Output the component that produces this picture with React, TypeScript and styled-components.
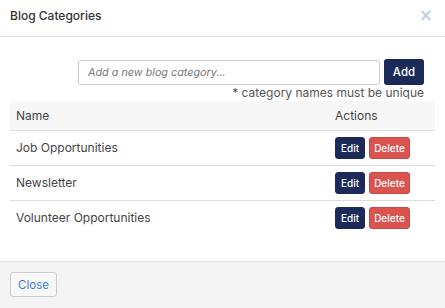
import React from "react";
import styled, { createGlobalStyle } from "styled-components";

const Global = createGlobalStyle`
  html, body { margin: 0; padding: 0; background: #fff; }
  body { font-family: Inter, "Noto Sans", sans-serif; color: #333; }
  * { box-sizing: border-box; }
`;

const Modal = styled.div`
  width: 445px;
  height: 308px;
  display: flex;
  flex-direction: column;
  background: #fff;
`;

const Header = styled.div`
  height: 37px;
  display: flex;
  align-items: center;
  justify-content: space-between;
  padding: 0 12px 5px 10px;
  border-bottom: 1px solid #e5e5e5;
`;

const Title = styled.h4`
  margin: 0;
  font-size: 12px;
  font-weight: 500;
  color: #333;
`;

const CloseX = styled.button`
  border: 0;
  background: none;
  padding: 0;
  color: #c3d1e4;
  font-size: 17px;
  font-weight: 700;
  line-height: 1;
  cursor: pointer;
  font-family: "DejaVu Sans", sans-serif;
`;

const Body = styled.div`
  flex: 1;
  padding: 22px 10px 0 10px;
  display: flex;
  flex-direction: column;
`;

const FormArea = styled.div`
  display: flex;
  flex-direction: column;
  align-items: flex-end;
  padding-right: 11px;
`;

const InputGroup = styled.div`
  display: flex;
  gap: 4px;
  align-items: center;
`;

const TextInput = styled.input`
  width: 302px;
  height: 25px;
  border: 1px solid #ccc;
  border-radius: 3px;
  padding: 0 9px;
  font-family: Inter, sans-serif;
  font-size: 10.8px;
  color: #333;
  outline: none;
  &::placeholder { color: #777; font-style: italic; }
`;

const AddButton = styled.button`
  width: 40px;
  height: 26px;
  border: 0;
  border-radius: 3px;
  background: #1c2a5a;
  color: #fff;
  font-family: Inter, sans-serif;
  font-size: 11.5px;
  font-weight: 500;
  padding: 0;
`;

const Note = styled.div`
  font-size: 12px;
  color: #555;
  margin-top: 0;
  line-height: 15px;
`;

const Table = styled.table`
  margin-top: 1px;
  width: 425px;
  border-collapse: collapse;
  font-size: 12px;
  color: #444;
`;

const HeadRow = styled.tr`
  background: #f7f7f7;
  border-bottom: 1px solid #ddd;
`;

const Th = styled.th<{ $w?: number }>`
  text-align: left;
  font-weight: 400;
  height: 29px;
  padding: 0 6px;
  ${(p) => (p.$w ? `width: ${p.$w}px;` : "")}
`;

const Row = styled.tr<{ $last?: boolean }>`
  border-bottom: ${(p) => (p.$last ? "0" : "1px solid #ddd")};
`;

const Td = styled.td`
  height: 35px;
  padding: 0 6px;
`;

const Actions = styled.div`
  display: flex;
  gap: 4px;
`;

const SmallButton = styled.button<{ $variant: "edit" | "delete" }>`
  height: 22px;
  padding: 0;
  width: ${(p) => (p.$variant === "edit" ? "30px" : "41px")};
  border-radius: 3px;
  border: 1px solid ${(p) => (p.$variant === "edit" ? "#1c2a5a" : "#cc4844")};
  background: ${(p) => (p.$variant === "edit" ? "#1c2a5a" : "#d9534f")};
  color: #fff;
  font-family: Inter, sans-serif;
  font-size: 10px;
  font-weight: 500;
`;

const Footer = styled.div`
  height: 47px;
  background: #f4f4f4;
  border-top: 1px solid #e2e2e2;
  display: flex;
  align-items: center;
  padding: 0 10px 1px 10px;
`;

const CloseButton = styled.button`
  width: 47px;
  height: 25px;
  background: #f8f8f8;
  border: 1px solid #ccc;
  border-radius: 3px;
  color: #3b7dd8;
  font-family: Inter, sans-serif;
  font-size: 11.5px;
  padding: 0;
`;

const categories = ["Job Opportunities", "Newsletter", "Volunteer Opportunities"];

export default function App() {
  return (
    <>
      <Global />
      <Modal>
        <Header>
          <Title>Blog Categories</Title>
          <CloseX aria-label="Close">×</CloseX>
        </Header>
        <Body>
          <FormArea>
            <InputGroup>
              <TextInput placeholder="Add a new blog category..." />
              <AddButton>Add</AddButton>
            </InputGroup>
            <Note>* category names must be unique</Note>
          </FormArea>
          <Table>
            <thead>
              <HeadRow>
                <Th>Name</Th>
                <Th $w={106}>Actions</Th>
              </HeadRow>
            </thead>
            <tbody>
              {categories.map((c, i) => (
                <Row key={c} $last={i === categories.length - 1}>
                  <Td>{c}</Td>
                  <Td>
                    <Actions>
                      <SmallButton $variant="edit">Edit</SmallButton>
                      <SmallButton $variant="delete">Delete</SmallButton>
                    </Actions>
                  </Td>
                </Row>
              ))}
            </tbody>
          </Table>
        </Body>
        <Footer>
          <CloseButton>Close</CloseButton>
        </Footer>
      </Modal>
    </>
  );
}
